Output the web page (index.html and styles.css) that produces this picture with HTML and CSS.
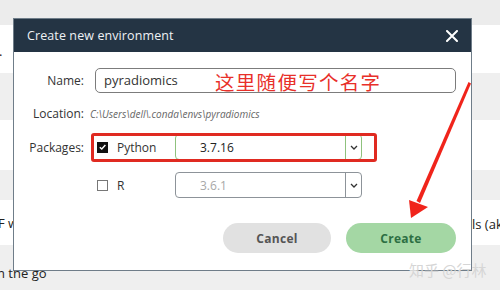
FILE: index.html
```html
<!DOCTYPE html>
<html>
<head>
    <title>Create new environment</title>
    <link rel="stylesheet" href="styles.css">
</head>
<body>
    <!-- page behind the dialog -->
    <div class="page">
        <div class="band gray top"></div>
        <div class="band white b1"><span class="left-text">.</span></div>
        <div class="band gray b2"></div>
        <div class="band white b3"></div>
        <div class="band gray b4"></div>
        <div class="band white b5">
            <span class="left-text">F w</span>
            <span class="right-text">ls (ak</span>
        </div>
        <div class="band gray b6"><span class="left-text">n the go</span></div>
    </div>

    <!-- modal dialog -->
    <div class="dialog">
        <div class="dialog-head">
            <span class="title">Create new environment</span>
            <svg class="close" width="12" height="12" viewBox="0 0 12 12">
                <path d="M1 1 L11 11 M11 1 L1 11" stroke="#fff" stroke-width="2" stroke-linecap="round"/>
            </svg>
        </div>
        <div class="dialog-body">
            <div class="form">
                <label class="lbl">Name:</label>
                <div class="name-box">pyradiomics</div>

                <label class="lbl">Location:</label>
                <div class="location">C:\Users\dell\.conda\envs\pyradiomics</div>

                <label class="lbl">Packages:</label>
                <div class="pkg-row marked">
                    <span class="check on">
                        <svg width="10" height="10" viewBox="0 0 10 10"><path d="M2 5.2 L4.2 7.3 L8.2 2.8" stroke="#fff" stroke-width="1.6" fill="none"/></svg>
                    </span>
                    <span class="pkg-name">Python</span>
                    <div class="select active">
                        <span class="value">3.7.16</span>
                        <span class="arrow"><svg width="8" height="5" viewBox="0 0 8 5"><path d="M1 1 L4 4 L7 1" stroke="#333" stroke-width="1.3" fill="none"/></svg></span>
                    </div>
                </div>

                <span></span>
                <div class="pkg-row second">
                    <span class="check"></span>
                    <span class="pkg-name">R</span>
                    <div class="select">
                        <span class="value dim">3.6.1</span>
                        <span class="arrow"><svg width="8" height="5" viewBox="0 0 8 5"><path d="M1 1 L4 4 L7 1" stroke="#333" stroke-width="1.3" fill="none"/></svg></span>
                    </div>
                </div>
            </div>
            <div class="buttons">
                <button class="btn cancel">Cancel</button>
                <button class="btn create">Create</button>
            </div>
        </div>
    </div>

    <!-- annotations drawn on top of the screenshot -->
    <div class="note">这里随便写个名字</div>
    <svg class="red-arrow" width="500" height="290" viewBox="0 0 500 290">
        <polygon points="468.5,82 471,83.5 420,203 416.5,201" fill="#f0241b"/>
        <polygon points="411,218 409,200 428,207" fill="#f0241b"/>
    </svg>
    <div class="watermark">知乎 @行林</div>
</body>
</html>
```

FILE: styles.css
```css
body {
    margin: 0;
    font-family: "Open Sans", "DejaVu Sans", "Noto Sans CJK SC", sans-serif;
    color: #333;
    width: 500px;
    height: 290px;
    overflow: hidden;
    position: relative;
}

/* Background page */
.page {
    display: flex;
    flex-direction: column;
}

.band {
    position: relative;
    font-size: 13px;
    color: #222;
    white-space: nowrap;
}

.gray { background: #efefef; }
.white { background: #fff; }

.top { height: 25px; background: #ececec; }
.b1 { height: 48px; }
.b2 { height: 47px; }
.b3 { height: 50px; }
.b4 { height: 30px; }
.b5 { height: 45px; }
.b6 { height: 45px; }

.left-text {
    position: absolute;
    left: -1px;
}

.b1 .left-text { top: 17px; }
.b5 .left-text { top: 14px; left: -2px; }
.b6 .left-text { top: 19px; left: -3px; }

.right-text {
    position: absolute;
    left: 472px;
    top: 15px;
}

/* Dialog */
.dialog {
    position: absolute;
    left: 13px;
    top: 18px;
    width: 457px;
    height: 251px;
    background: #fff;
    border: 1px solid #6f7d89;
    display: flex;
    flex-direction: column;
}

.dialog-head {
    height: 33px;
    background: #243444;
    color: #eef1f4;
    display: flex;
    align-items: center;
    justify-content: space-between;
    padding: 0 13px 0 13px;
    flex-shrink: 0;
}

.title {
    font-size: 12.5px;
    letter-spacing: 0.1px;
}

.dialog-body {
    padding: 16px 15px 0 0;
}

.form {
    display: grid;
    grid-template-columns: 70px 1fr;
    column-gap: 6px;
    align-items: center;
}

.lbl {
    text-align: right;
    font-size: 12px;
    color: #333;
}

.name-box {
    margin-left: 5px;
    height: 23px;
    border: 1px solid #7c7c7c;
    border-radius: 5px;
    font-size: 13px;
    line-height: 23px;
    padding-left: 8px;
    color: #333;
}

.location {
    font-size: 10px;
    font-style: italic;
    color: #666;
    height: 41px;
    line-height: 43px;
}

.pkg-row {
    display: flex;
    align-items: center;
    height: 26px;
    padding-left: 7px;
    position: relative;
}

.pkg-row.second { margin-top: 12px; }

/* red annotation frame round the Python row */
.marked::before {
    content: "";
    position: absolute;
    left: 1px;
    top: -1px;
    width: 280px;
    height: 23px;
    border: 3px solid #e02a21;
    border-radius: 3px;
    z-index: 2;
}

.check {
    width: 11px;
    height: 11px;
    border: 1px solid #777;
    box-sizing: border-box;
    display: flex;
    align-items: center;
    justify-content: center;
}

.check.on {
    background: #111;
    border-color: #111;
}

.pkg-name {
    font-size: 12px;
    margin-left: 9px;
    width: 58px;
}

.select {
    width: 185px;
    height: 24px;
    border: 1px solid #8d9399;
    border-radius: 4px;
    display: flex;
    align-items: center;
    justify-content: space-between;
}

.select.active { border-color: #8fc27d; }

.value {
    font-size: 12px;
    padding-left: 24px;
    color: #222;
}

.value.dim { color: #a8a8a8; }

.arrow {
    width: 15px;
    height: 24px;
    border-left: 1px solid #8d9399;
    display: flex;
    align-items: center;
    justify-content: center;
}

.select.active .arrow { border-left-color: #8fc27d; }

.buttons {
    display: flex;
    justify-content: flex-end;
    gap: 15px;
    margin-top: 25px;
}

.btn {
    height: 30px;
    border: none;
    border-radius: 15px;
    font-family: "Open Sans", "DejaVu Sans", sans-serif;
    font-size: 12px;
    font-weight: bold;
    letter-spacing: 0.3px;
}

.cancel {
    width: 108px;
    background: #e1e1e1;
    color: #555;
}

.create {
    width: 110px;
    background: #a4d7a4;
    color: #2d6f43;
}

/* Annotations */
.note {
    position: absolute;
    left: 215px;
    top: 67px;
    font-family: "Noto Sans CJK SC", sans-serif;
    font-size: 19.5px;
    color: #e8302a;
    letter-spacing: 1.3px;
}

.red-arrow {
    position: absolute;
    left: 0;
    top: 0;
}

.watermark {
    position: absolute;
    left: 409px;
    top: 259px;
    font-family: "Noto Sans CJK SC", sans-serif;
    font-size: 15px;
    color: #d6d6d6;
}
```
